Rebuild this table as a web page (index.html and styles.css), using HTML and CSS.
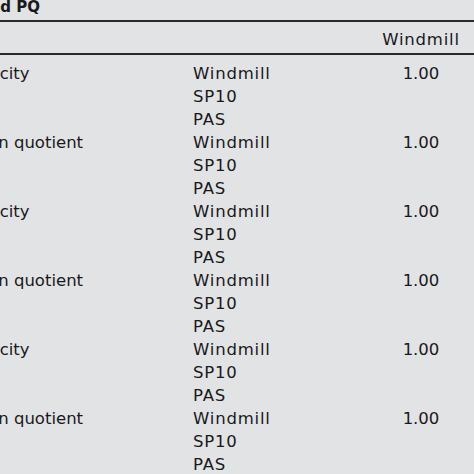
FILE: index.html
```html
<!DOCTYPE html>
<html>
<head>
<meta charset="utf-8">
<link rel="stylesheet" href="styles.css">
</head>
<body>
<div class="page">
  <div class="title">Table 2 Vital capacity, MPT and PQ</div>
  <div class="table">
    <div class="head">
      <div class="c1"></div>
      <div class="c2"></div>
      <div class="c3">Windmill</div>
    </div>
    <div class="body">
      <div class="row">
        <div class="c1">Vital capacity</div>
        <div class="c2"><div>Windmill</div><div>SP10</div><div>PAS</div></div>
        <div class="c3">1.00</div>
      </div>
      <div class="row">
        <div class="c1 q">Phonation quotient</div>
        <div class="c2"><div>Windmill</div><div>SP10</div><div>PAS</div></div>
        <div class="c3">1.00</div>
      </div>
      <div class="row">
        <div class="c1">Vital capacity</div>
        <div class="c2"><div>Windmill</div><div>SP10</div><div>PAS</div></div>
        <div class="c3">1.00</div>
      </div>
      <div class="row">
        <div class="c1 q">Phonation quotient</div>
        <div class="c2"><div>Windmill</div><div>SP10</div><div>PAS</div></div>
        <div class="c3">1.00</div>
      </div>
      <div class="row">
        <div class="c1">Vital capacity</div>
        <div class="c2"><div>Windmill</div><div>SP10</div><div>PAS</div></div>
        <div class="c3">1.00</div>
      </div>
      <div class="row">
        <div class="c1 q">Phonation quotient</div>
        <div class="c2"><div>Windmill</div><div>SP10</div><div>PAS</div></div>
        <div class="c3">1.00</div>
      </div>
    </div>
  </div>
</div>
</body>
</html>
```
FILE: styles.css
```css
html, body {
  margin: 0;
  padding: 0;
  background: #e2e3e5;
  overflow: hidden;
  width: 474px;
  height: 474px;
}
.page {
  margin-left: -82px;
  width: 560px;
  font-family: "DejaVu Sans", "Liberation Sans", sans-serif;
  font-size: 16.5px;
  color: #19181a;
}
.title {
  font-weight: bold;
  font-size: 15px;
  line-height: 15px;
  height: 20px;
  white-space: nowrap;
  text-align: right;
  width: 122px;
  direction: rtl;
}
.table {
  border-top: 2px solid #2a2a2c;
}
.head, .row {
  display: grid;
  grid-template-columns: 275px 173px 110px;
}
.head {
  height: 27px;
  padding-top: 4px;
  line-height: 27px;
  border-bottom: 2px solid #2a2a2c;
}
.head .c3 {
  text-align: center;
  letter-spacing: 0.8px;
}
.body {
  padding-top: 7px;
}
.row {
  line-height: 23px;
  white-space: nowrap;
}
.row .c2 {
  letter-spacing: 0.8px;
}
.row .c3 {
  text-align: center;
}
.q {
  margin-left: 8px;
}
```
